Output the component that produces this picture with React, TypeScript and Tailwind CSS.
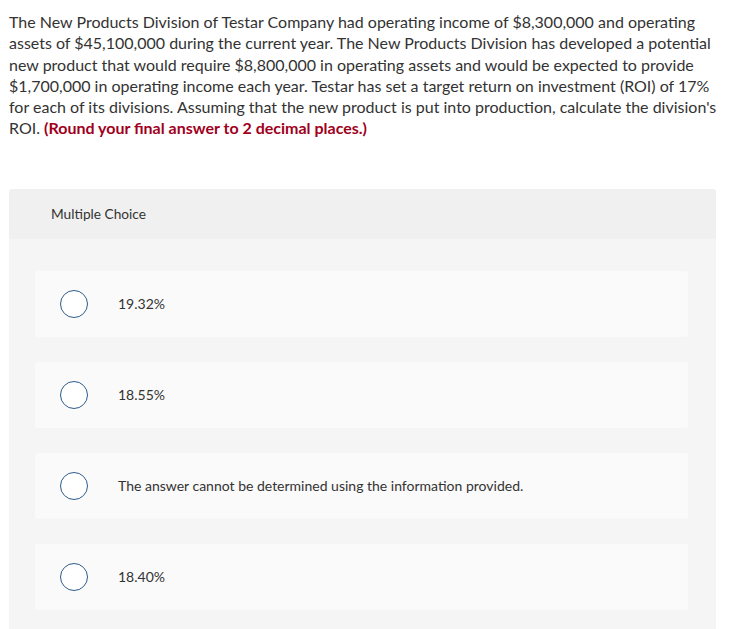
export default function App() {
  const options = [
    "19.32%",
    "18.55%",
    "The answer cannot be determined using the information provided.",
    "18.40%",
  ];
  const lines = [
    "The New Products Division of Testar Company had operating income of $8,300,000 and operating",
    "assets of $45,100,000 during the current year. The New Products Division has developed a potential",
    "new product that would require $8,800,000 in operating assets and would be expected to provide",
    "$1,700,000 in operating income each year. Testar has set a target return on investment (ROI) of 17%",
    "for each of its divisions. Assuming that the new product is put into production, calculate the division's",
  ];
  return (
    <div className="bg-white min-h-screen" style={{ fontFamily: "Lato, 'Noto Sans', sans-serif" }}>
      <div className="pl-[9px] pr-[4px] pt-[11px]">
        <p className="text-[16px] leading-[21.3px] text-[#333] whitespace-nowrap">
          {lines.map((l) => (
            <span key={l}>
              {l}
              <br />
            </span>
          ))}
          ROI.{" "}
          <strong className="text-[#a0001c] font-bold">(Round your final answer to 2 decimal places.)</strong>
        </p>
      </div>
      <div className="ml-[9px] mr-[15px] mt-[50px] rounded-t-[3px] overflow-hidden">
        <div className="h-[50px] bg-[#f0f0f0] flex items-center pl-[42px] text-[13.7px] text-[#333]">
          Multiple Choice
        </div>
        <div className="bg-[#f5f5f5] pt-[32px] pb-[32px] pl-[26px] pr-[28px] flex flex-col gap-[25px]">
          {options.map((o) => (
            <div key={o} className="h-[66px] bg-[#fafafa] rounded-[3px] flex items-center">
              <div className="ml-[25px] w-[28px] h-[28px] rounded-full border-[1.5px] border-[#2e5b8a] bg-white shrink-0" />
              <div className="ml-[30px] text-[14px] text-[#333]">{o}</div>
            </div>
          ))}
        </div>
      </div>
    </div>
  );
}
